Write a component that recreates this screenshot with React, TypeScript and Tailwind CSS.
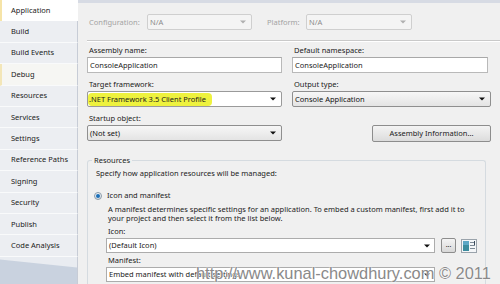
const tabs = [
  "Application",
  "Build",
  "Build Events",
  "Debug",
  "Resources",
  "Services",
  "Settings",
  "Reference Paths",
  "Signing",
  "Security",
  "Publish",
  "Code Analysis",
];

function Arrow({ color = "#111" }: { color?: string }) {
  return (
    <svg width="6" height="4" viewBox="0 0 6 4" className="shrink-0">
      <path d="M0 0.5h6L3 3.5z" fill={color} />
    </svg>
  );
}

function Combo({
  children,
  className = "",
  disabled = false,
}: {
  children: React.ReactNode;
  className?: string;
  disabled?: boolean;
}) {
  return (
    <div
      className={`flex items-center justify-between rounded-[2px] border pl-[2px] pr-[5px] ${
        disabled
          ? "border-[#cfcfcf] bg-[#f4f4f4] text-[#9a9a9a]"
          : "border-[#8f8f8f] bg-gradient-to-b from-[#f7f7f7] to-[#e4e4e4] text-[#111]"
      } ${className}`}
    >
      <div className="flex min-w-0 items-center">{children}</div>
      <Arrow color={disabled ? "#b0b0b0" : "#111"} />
    </div>
  );
}

function TextBox({ value }: { value: string }) {
  return (
    <div className="flex h-[16px] items-center border border-[#b9b9b9] border-t-[#a8a8a8] bg-white pl-[2px]">
      {value}
    </div>
  );
}

export default function App() {
  return (
    <div
      className="relative flex h-[284px] w-[500px] overflow-hidden bg-[#f0f0f0] text-[7.5px] leading-[9px] text-[#1b1b1b]"
      style={{ fontFamily: '"Noto Sans", "Open Sans", sans-serif' }}
    >
      {/* tab column */}
      <div className="flex w-[78px] shrink-0 flex-col bg-[#e6e9ef]">
        {tabs.map((t, i) => (
          <div
            key={t}
            className={`flex h-[21.4px] items-center pl-[9px] ${
              i === 0
                ? "border-l-2 border-[#f6e4a8] bg-white"
                : i === 3
                ? "border-b border-l-2 border-r border-b-[#f9fafb] border-l-[#f3e6b8] border-r-[#c7ccd6] bg-[#f6f6f3]"
                : "border-b border-r border-b-[#f9fafb] border-r-[#c7ccd6] bg-[#eceef2] pl-[11px]"
            }`}
          >
            {t}
          </div>
        ))}
        <div className="relative flex-1 border-r border-[#c7ccd6] bg-[#c9d2df]">
          <div className="h-full bg-[#e9ecf1] [clip-path:polygon(0_0,100%_0,100%_40%,0_10%)]" />
        </div>
      </div>

      {/* content */}
      <div className="flex min-w-0 flex-1 flex-col border-t-[3px] border-[#d7dbe4] pl-[9px]">
        <div className="mt-[11px] flex h-[16px] items-center text-[#a3a3a3]">
          <span className="ml-[2px] w-[58px]">Configuration:</span>
          <Combo disabled className="h-[16px] w-[105px]">
            <span className="text-[#8c8c8c]">N/A</span>
          </Combo>
          <span className="ml-[15px] w-[39px]">Platform:</span>
          <Combo disabled className="h-[16px] w-[106px]">
            <span className="text-[#8c8c8c]">N/A</span>
          </Combo>
        </div>

        <div className="mt-[10px] border-t border-b border-t-[#c9c9c9] border-b-white" />

        <div className="mt-[4px] grid grid-cols-[195px_199px] gap-x-[10px] pr-[10px]">
          <div className="flex flex-col">
            <span className="ml-[2px] h-[11px]">Assembly name:</span>
            <TextBox value="ConsoleApplication" />
            <span className="ml-[2px] mt-[7px] h-[11px]">Target framework:</span>
            <div className="flex h-[16px] items-center justify-between rounded-[2px] border border-[#9a9a9a] bg-white pr-[5px]">
              <span className="flex h-[13px] items-center rounded-[4px] bg-[#eef23e] pl-[1px] pr-[6px]">
                .NET Framework 3.5 Client Profile
              </span>
              <Arrow />
            </div>
            <span className="ml-[2px] mt-[7px] h-[11px]">Startup object:</span>
            <Combo className="h-[16px]">(Not set)</Combo>
          </div>
          <div className="flex flex-col">
            <span className="ml-[2px] h-[11px]">Default namespace:</span>
            <div className="w-[196px]">
              <TextBox value="ConsoleApplication" />
            </div>
            <span className="ml-[2px] mt-[7px] h-[11px]">Output type:</span>
            <Combo className="h-[16px]">Console Application</Combo>
            <div className="mt-[18px] flex justify-end">
              <div className="flex h-[17px] w-[119px] items-center justify-center rounded-[2px] border border-[#8d8d8d] bg-gradient-to-b from-[#f4f4f4] to-[#dcdcdc]">
                Assembly Information...
              </div>
            </div>
          </div>
        </div>

        {/* resources group */}
        <div className="relative mt-[18px] w-[399px] flex-1 rounded-t-[3px] border border-b-0 border-[#d5dbe0] pl-[8px]">
          <span className="absolute -top-[5px] left-[4px] bg-[#f0f0f0] px-[2px]">Resources</span>
          <div className="mt-[8px]">Specify how application resources will be managed:</div>
          <div className="mt-[13px] flex items-center">
            <span className="ml-[-2px] flex h-[8px] w-[8px] items-center justify-center rounded-full border border-[#8a9aa8] bg-gradient-to-b from-[#f4f7fa] to-[#d5dde4]">
              <span className="h-[4px] w-[4px] rounded-full bg-[#1b6fb8]" />
            </span>
            <span className="ml-[5px]">Icon and manifest</span>
          </div>
          <div className="ml-[12px] mt-[5px] flex flex-col">
            <span>
              A manifest determines specific settings for an application. To embed a custom manifest, first add it to
            </span>
            <span>your project and then select it from the list below.</span>
            <span className="mt-[4px]">Icon:</span>
            <div className="mt-[2px] flex items-center">
              <div className="ml-[-2px] flex h-[15px] w-[329px] items-center justify-between border border-[#acacac] bg-white pl-[2px] pr-[4px]">
                (Default Icon)
                <Arrow />
              </div>
              <div className="ml-[6px] flex h-[15px] w-[15px] items-center justify-center rounded-[2px] border border-[#8d8d8d] bg-gradient-to-b from-[#f4f4f4] to-[#d8d8d8] pb-[3px] text-[7px]">
                ...
              </div>
              <svg width="16" height="14" viewBox="0 0 16 14" className="ml-[5px]">
                <rect x="0.5" y="0.5" width="15" height="13" fill="#f4f6f8" stroke="#9aa3ab" />
                <rect x="2" y="2" width="6" height="10" fill="#3b8c9e" />
                <rect x="2" y="2" width="6" height="4" fill="#5da7c5" />
                <rect x="9" y="3" width="5" height="1" fill="#7d8a96" />
                <rect x="9" y="6" width="5" height="1" fill="#7d8a96" />
                <rect x="9" y="9" width="5" height="1" fill="#7d8a96" />
                <rect x="13" y="2" width="1" height="4" fill="#3a4b5c" />
              </svg>
            </div>
            <span className="mt-[3px]">Manifest:</span>
            <div className="ml-[-2px] mt-[2px] flex h-[15px] w-[329px] items-center justify-between border border-[#acacac] bg-white pl-[2px] pr-[4px]">
              Embed manifest with default settings
              <Arrow />
            </div>
          </div>
        </div>
      </div>

      {/* watermark */}
      <div
        className="absolute left-[196px] top-[265px] whitespace-nowrap text-[16.4px] leading-none text-[#8a8a8a]"
        style={{
          fontFamily: '"Liberation Sans", Arial, sans-serif',
          textShadow: "0 0 2px #fff, 0 0 1px #fff",
        }}
      >
        http://www.kunal-chowdhury.com © 2011
      </div>
    </div>
  );
}
